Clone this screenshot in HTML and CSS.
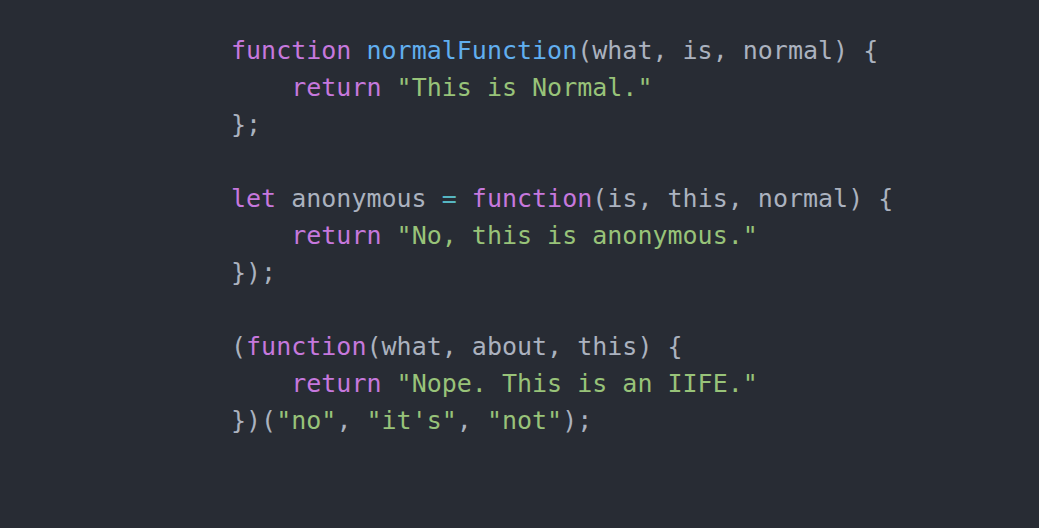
FILE: index.html
```html
<!DOCTYPE html>
<html>
<head>
<meta charset="utf-8">
<link rel="stylesheet" href="styles.css">
</head>
<body>
<main class="stage">
<pre class="code"><span class="kw">function</span> <span class="fn">normalFunction</span>(what, is, normal) {
    <span class="kw">return</span> <span class="str">"This is Normal."</span>
};

<span class="kw">let</span> anonymous <span class="op">=</span> <span class="kw">function</span>(is, this, normal) {
    <span class="kw">return</span> <span class="str">"No, this is anonymous."</span>
});

(<span class="kw">function</span>(what, about, this) {
    <span class="kw">return</span> <span class="str">"Nope. This is an IIFE."</span>
})(<span class="str">"no"</span>, <span class="str">"it's"</span>, <span class="str">"not"</span>);</pre>
</main>
</body>
</html>
```

FILE: styles.css
```css
html, body {
  margin: 0;
  padding: 0;
  background: #282c34;
  height: 100%;
}
.stage {
  padding: 32px 0 0 231px;
  height: 528px;
  box-sizing: border-box;
}
.code {
  margin: 0;
  font-family: "DejaVu Sans Mono", monospace;
  font-size: 25px;
  line-height: 37px;
  color: #abb2bf;
}
.kw { color: #c678dd; }
.fn { color: #61afef; }
.str { color: #98c379; }
.op { color: #56b6c2; }
```
